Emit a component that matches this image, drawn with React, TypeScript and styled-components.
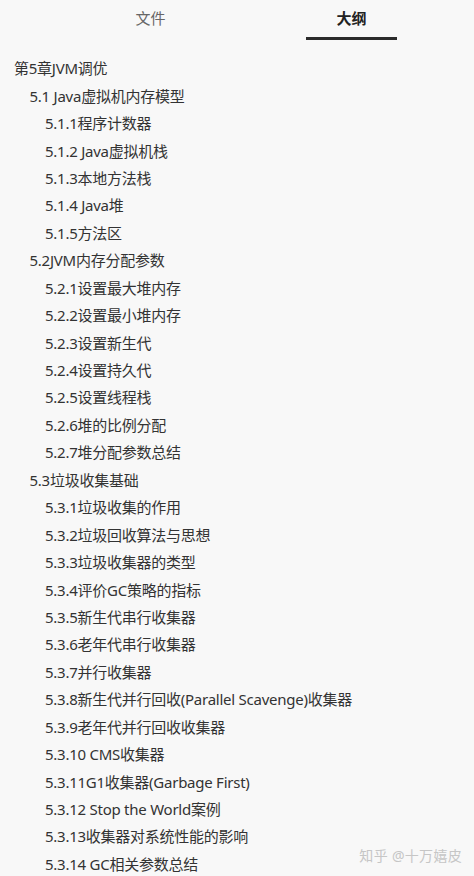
import React from "react";
import styled, { createGlobalStyle } from "styled-components";

const Global = createGlobalStyle`
  html, body { margin: 0; padding: 0; background: #f8f8f8; }
  body { font-family: "Noto Sans", "Noto Sans CJK SC", sans-serif; color: #333; }
`;

const Page = styled.div`
  position: relative;
  width: 474px;
  height: 876px;
  overflow: hidden;
  background: #f8f8f8;
`;

const Tabs = styled.div`
  display: flex;
  height: 40px;
  padding-left: 50px;
`;

const Tab = styled.div<{ $active?: boolean }>`
  position: relative;
  width: 201px;
  display: flex;
  justify-content: center;
  padding-top: 7px;
  box-sizing: border-box;
  font-size: 15px;
  line-height: 22px;
  font-weight: ${(p) => (p.$active ? 700 : 400)};
  color: ${(p) => (p.$active ? "#222" : "#666")};
  &::after {
    content: "";
    display: ${(p) => (p.$active ? "block" : "none")};
    position: absolute;
    left: 55px;
    width: 91px;
    bottom: 0;
    height: 3px;
    background: #2b2b2b;
  }
`;

const List = styled.div`
  display: flex;
  flex-direction: column;
  padding-top: 14px;
`;

const Item = styled.div<{ $level: number }>`
  height: 27.45px;
  display: flex;
  align-items: center;
  padding-left: ${(p) => 14 + p.$level * 15.5}px;
  font-size: 15px;
  letter-spacing: -0.25px;
  color: #333;
  white-space: nowrap;
`;

const Watermark = styled.div`
  position: absolute;
  right: 12px;
  bottom: 11px;
  font-size: 14px;
  color: #c6c6c6;
  letter-spacing: 0.3px;
`;

const items: [number, string][] = [
  [0, "第5章JVM调优"],
  [1, "5.1 Java虚拟机内存模型"],
  [2, "5.1.1程序计数器"],
  [2, "5.1.2 Java虚拟机栈"],
  [2, "5.1.3本地方法栈"],
  [2, "5.1.4 Java堆"],
  [2, "5.1.5方法区"],
  [1, "5.2JVM内存分配参数"],
  [2, "5.2.1设置最大堆内存"],
  [2, "5.2.2设置最小堆内存"],
  [2, "5.2.3设置新生代"],
  [2, "5.2.4设置持久代"],
  [2, "5.2.5设置线程栈"],
  [2, "5.2.6堆的比例分配"],
  [2, "5.2.7堆分配参数总结"],
  [1, "5.3垃圾收集基础"],
  [2, "5.3.1垃圾收集的作用"],
  [2, "5.3.2垃圾回收算法与思想"],
  [2, "5.3.3垃圾收集器的类型"],
  [2, "5.3.4评价GC策略的指标"],
  [2, "5.3.5新生代串行收集器"],
  [2, "5.3.6老年代串行收集器"],
  [2, "5.3.7并行收集器"],
  [2, "5.3.8新生代并行回收(Parallel Scavenge)收集器"],
  [2, "5.3.9老年代并行回收收集器"],
  [2, "5.3.10 CMS收集器"],
  [2, "5.3.11G1收集器(Garbage First)"],
  [2, "5.3.12 Stop the World案例"],
  [2, "5.3.13收集器对系统性能的影响"],
  [2, "5.3.14 GC相关参数总结"],
];

export default function App() {
  return (
    <Page>
      <Global />
      <Tabs>
        <Tab>文件</Tab>
        <Tab $active>大纲</Tab>
      </Tabs>
      <List>
        {items.map(([lvl, text], i) => (
          <Item key={i} $level={lvl}>
            {text}
          </Item>
        ))}
      </List>
      <Watermark>知乎 @十万嬉皮</Watermark>
    </Page>
  );
}
